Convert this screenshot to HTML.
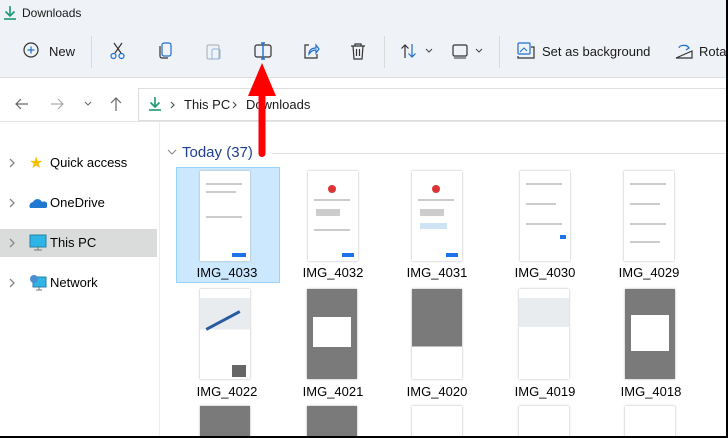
<!DOCTYPE html>
<html><head><style>
*{margin:0;padding:0;box-sizing:border-box}
html,body{width:728px;height:438px;overflow:hidden}
body{background:#fff;font-family:"Liberation Sans",sans-serif;position:relative;color:#000}
.abs{position:absolute}
.title{left:0;top:0;width:728px;height:26px;background:#eff2f7}
.tb{left:0;top:26px;width:728px;height:52px;background:#eff2f7;border-bottom:1px solid #dcdcdc}
.t{font-size:13px;color:#1a1a1a}
.sep{width:1px;height:32px;background:#dadada;top:36px}
.addr{left:138px;top:88px;width:592px;height:33px;border:1px solid #dedede;border-right:none;background:#fff}
.side{left:0;top:122px;width:160px;height:316px;border-right:1px solid #eee}
.item{left:0;height:28px;width:157px;font-size:13px}
.thumb{width:50px;height:90px;background:#fff;box-shadow:0 0 2px #aaa;overflow:hidden}
.r2{height:90px;top:289px}
.r3{height:40px;top:406px}
.dark{background:#7a7a7a}
.lbl{font-size:13px;width:100px;text-align:center}
.ln{position:absolute;height:2px;background:#ccc;left:6px}
.chev{position:absolute;left:9px;top:9px}
</style></head><body>
<div class="abs title"></div>
<svg class="abs" style="left:3px;top:5px" width="14" height="16"><path d="M7 1v10M2.5 6.5L7 11l4.5-4.5" stroke="#1a9a6e" stroke-width="1.6" fill="none"/><path d="M1 14h12" stroke="#1a9a6e" stroke-width="1.6"/></svg>
<div class="abs t" style="left:22px;top:6px;font-size:12px">Downloads</div>
<div class="abs tb"></div>
<svg class="abs" style="left:23px;top:42px" width="16" height="16"><circle cx="8" cy="8" r="7" stroke="#333" fill="none" stroke-width="1.2"/><path d="M8 4.5v7M4.5 8h7" stroke="#1f6fd0" stroke-width="1.2"/></svg>
<div class="abs t" style="left:49px;top:44px">New</div>
<div class="abs sep" style="left:91px"></div>
<svg class="abs" style="left:109px;top:42px" width="18" height="18"><path d="M5 1l7 10M13 1L6 11" stroke="#333" stroke-width="1.2"/><circle cx="4.5" cy="14" r="2.5" stroke="#1f6fd0" fill="none" stroke-width="1.2"/><circle cx="12.5" cy="14" r="2.5" stroke="#1f6fd0" fill="none" stroke-width="1.2"/></svg>
<svg class="abs" style="left:158px;top:42px" width="16" height="18"><rect x="4" y="1" width="9" height="13" rx="2" stroke="#1f6fd0" fill="none" stroke-width="1.2"/><path d="M2 4v10a2 2 0 0 0 2 2h6" stroke="#333" fill="none" stroke-width="1.2"/></svg>
<svg class="abs" style="left:206px;top:42px" width="16" height="18" opacity=".45"><rect x="1" y="3" width="12" height="14" rx="1.5" stroke="#555" fill="none"/><rect x="6" y="7" width="8" height="10" rx="1.5" stroke="#1f6fd0" fill="none"/></svg>
<svg class="abs" style="left:254px;top:42px" width="18" height="18"><rect x="1" y="3" width="16" height="12" rx="2" stroke="#333" fill="none" stroke-width="1.2"/><path d="M9 1v16M7 1h4M7 17h4" stroke="#1f6fd0" stroke-width="1.4"/></svg>
<svg class="abs" style="left:302px;top:42px" width="18" height="18"><path d="M7 3H3v13h12v-4" stroke="#333" fill="none" stroke-width="1.2"/><path d="M7 12c0-4 3-6 7-6V3l3 4-3 4V8c-3 0-5 1-7 4z" stroke="#1f6fd0" fill="none" stroke-width="1.2"/></svg>
<svg class="abs" style="left:350px;top:42px" width="16" height="18"><path d="M1 4h14M5 4V2h6v2M3 4l1 13h8l1-13M6.5 7v7M9.5 7v7" stroke="#333" fill="none" stroke-width="1.2"/></svg>
<div class="abs sep" style="left:384px"></div>
<svg class="abs" style="left:400px;top:42px" width="18" height="18"><path d="M5 16V3M1.5 6.5L5 3l3.5 3.5" stroke="#333" fill="none" stroke-width="1.2"/><path d="M12 2v13M8.5 11.5L12 15l3.5-3.5" stroke="#1f6fd0" fill="none" stroke-width="1.2"/></svg>
<svg class="abs" style="left:425px;top:48px" width="8" height="6"><path d="M1 1l3 3 3-3" stroke="#444" fill="none"/></svg>
<svg class="abs" style="left:452px;top:43px" width="16" height="16"><rect x="1" y="2" width="14" height="11" rx="1.5" stroke="#333" fill="none" stroke-width="1.2"/><path d="M2 15h12" stroke="#333"/></svg>
<svg class="abs" style="left:475px;top:48px" width="8" height="6"><path d="M1 1l3 3 3-3" stroke="#444" fill="none"/></svg>
<div class="abs sep" style="left:499px"></div>
<svg class="abs" style="left:517px;top:42px" width="18" height="18"><rect x="1" y="1" width="12" height="11" rx="1" stroke="#1f6fd0" fill="none" stroke-width="1.2"/><path d="M3 10l4-4 3 3" stroke="#1f6fd0" fill="none"/><path d="M1 14v2h16v-11h-3" stroke="#333" fill="none" stroke-width="1.2"/></svg>
<div class="abs t" style="left:542px;top:44px">Set as background</div>
<svg class="abs" style="left:675px;top:42px" width="18" height="18"><path d="M4 6c0-3 8-4 10 0M11 3l3 3-3 2" stroke="#1f6fd0" fill="none" stroke-width="1.2"/><path d="M1 16h16L17 9z" stroke="#333" fill="none" stroke-width="1.2"/></svg>
<div class="abs t" style="left:699px;top:44px">Rotat</div>

<div class="abs" style="left:0;top:78px;width:728px;height:44px;background:#fff;border-bottom:1px solid #e5e5e5"></div>
<svg class="abs" style="left:14px;top:96px" width="110" height="16"><path d="M2 8h12M7 3L2 8l5 5" stroke="#666" fill="none" stroke-width="1.2"/><path d="M37 8h12M44 3l5 5-5 5" stroke="#aaa" fill="none" stroke-width="1.2"/><path d="M71 6l3 3 3-3" stroke="#666" fill="none"/><path d="M102 2v13M97 7l5-5 5 5" stroke="#666" fill="none" stroke-width="1.2"/></svg>
<div class="abs addr"></div>
<svg class="abs" style="left:148px;top:96px" width="14" height="16"><path d="M7 1v10M2.5 6.5L7 11l4.5-4.5" stroke="#1a9a6e" stroke-width="1.6" fill="none"/><path d="M1 14h12" stroke="#1a9a6e" stroke-width="1.6"/></svg>
<svg class="abs" style="left:170px;top:101px" width="6" height="8"><path d="M1 1l3 3-3 3" stroke="#555" fill="none" stroke-width="1.2"/></svg>
<div class="abs t" style="left:184px;top:97px">This PC</div>
<svg class="abs" style="left:232px;top:101px" width="6" height="8"><path d="M1 1l3 3-3 3" stroke="#555" fill="none" stroke-width="1.2"/></svg>
<div class="abs t" style="left:246px;top:97px">Downloads</div>

<div class="abs side"></div>
<div class="abs item" style="top:149px"><svg class="chev" width="6" height="10"><path d="M1 1l4 4-4 4" stroke="#888" fill="none" stroke-width="1.3"/></svg><span class="abs" style="left:29px;top:4px;color:#f5c000;font-size:16px">★</span><span class="abs" style="left:50px;top:6px">Quick access</span></div>
<div class="abs item" style="top:189px"><svg class="chev" width="6" height="10"><path d="M1 1l4 4-4 4" stroke="#888" fill="none" stroke-width="1.3"/></svg><svg class="abs" style="left:29px;top:8px" width="18" height="12"><path d="M1 11a4 4 0 0 1 3-6 5 5 0 0 1 9 0 3.5 3.5 0 0 1 4 6z" fill="#1f78d1"/></svg><span class="abs" style="left:50px;top:6px">OneDrive</span></div>
<div class="abs item" style="top:229px;background:#dadcdc"><svg class="chev" width="6" height="10"><path d="M1 1l4 4-4 4" stroke="#888" fill="none" stroke-width="1.3"/></svg><svg class="abs" style="left:29px;top:5px" width="18" height="18"><rect x="1" y="1" width="16" height="12" fill="#2fb4e6" stroke="#2a7fa8"/><path d="M9 13v3M5 16h8" stroke="#777"/></svg><span class="abs" style="left:50px;top:6px">This PC</span></div>
<div class="abs item" style="top:269px"><svg class="chev" width="6" height="10"><path d="M1 1l4 4-4 4" stroke="#888" fill="none" stroke-width="1.3"/></svg><svg class="abs" style="left:29px;top:5px" width="18" height="18"><rect x="4" y="3" width="13" height="10" fill="#2fb4e6" stroke="#2a7fa8"/><circle cx="5" cy="5" r="4" fill="#4a8fd0"/><path d="M10 13v3M7 16h6" stroke="#777"/></svg><span class="abs" style="left:50px;top:6px">Network</span></div>

<svg class="abs" style="left:167px;top:149px" width="10" height="7"><path d="M1 1l4 4 4-4" stroke="#888" fill="none"/></svg>
<div class="abs" style="left:182px;top:144px;color:#1e3f8f;font-size:15px">Today (37)</div>
<div class="abs" style="left:272px;top:153px;width:456px;height:1px;background:#e2e2e2"></div>
<div class="abs" style="left:176px;top:167px;width:104px;height:116px;background:#cce8ff;border:1px solid #99d1ff"></div>

<!-- row1 -->
<div class="abs thumb" style="left:200px;top:171px"><div class="ln" style="top:12px;width:36px"></div><div class="ln" style="top:20px;width:30px"></div><div class="ln" style="top:45px;width:36px"></div><div class="abs" style="left:32px;top:82px;width:14px;height:4px;background:#1a73e8"></div></div>
<div class="abs thumb" style="left:308px;top:171px"><div class="abs" style="left:20px;top:14px;width:8px;height:8px;border-radius:50%;background:#d33"></div><div class="ln" style="top:28px;width:36px"></div><div class="abs" style="left:8px;top:38px;width:24px;height:7px;background:#ccc"></div><div class="ln" style="top:58px;width:36px"></div><div class="abs" style="left:34px;top:82px;width:12px;height:4px;background:#1a73e8"></div></div>
<div class="abs thumb" style="left:412px;top:171px"><div class="abs" style="left:20px;top:14px;width:8px;height:8px;border-radius:50%;background:#d33"></div><div class="ln" style="top:28px;width:36px"></div><div class="abs" style="left:8px;top:38px;width:24px;height:7px;background:#ccc"></div><div class="abs" style="left:8px;top:52px;width:27px;height:6px;background:#cfe3f7"></div><div class="abs" style="left:34px;top:82px;width:12px;height:4px;background:#1a73e8"></div></div>
<div class="abs thumb" style="left:520px;top:171px"><div class="ln" style="top:12px;width:36px"></div><div class="ln" style="top:32px;width:30px"></div><div class="ln" style="top:52px;width:36px"></div><div class="abs" style="left:40px;top:64px;width:6px;height:4px;background:#1a73e8"></div></div>
<div class="abs thumb" style="left:624px;top:171px"><div class="ln" style="top:12px;width:36px"></div><div class="ln" style="top:32px;width:30px"></div><div class="ln" style="top:52px;width:36px"></div><div class="ln" style="top:70px;width:30px"></div></div>
<div class="abs lbl" style="left:177px;top:265px">IMG_4033</div>
<div class="abs lbl" style="left:283px;top:265px">IMG_4032</div>
<div class="abs lbl" style="left:387px;top:265px">IMG_4031</div>
<div class="abs lbl" style="left:495px;top:265px">IMG_4030</div>
<div class="abs lbl" style="left:599px;top:265px">IMG_4029</div>

<!-- row2 -->
<div class="abs thumb r2" style="left:200px;background:linear-gradient(#fff 0,#fff 10%,#e8ecef 10%,#e8ecef 45%,#fff 45%)"><div class="abs" style="left:4px;top:30px;width:38px;height:3px;background:#2a5aa0;transform:rotate(-28deg)"></div><div class="abs" style="left:32px;top:76px;width:14px;height:12px;background:#666"></div></div>
<div class="abs thumb dark r2" style="left:307px"><div class="abs" style="left:6px;top:28px;width:38px;height:30px;background:#fff"></div></div>
<div class="abs thumb dark r2" style="left:412px;background:linear-gradient(#7a7a7a 64%,#fff 64%)"></div>
<div class="abs thumb r2" style="left:519px;background:linear-gradient(#fff 10%,#e8ecef 10%,#e8ecef 42%,#fff 42%)"></div>
<div class="abs thumb dark r2" style="left:625px"><div class="abs" style="left:6px;top:26px;width:38px;height:36px;background:#fff"></div></div>
<div class="abs lbl" style="left:177px;top:384px">IMG_4022</div>
<div class="abs lbl" style="left:283px;top:384px">IMG_4021</div>
<div class="abs lbl" style="left:387px;top:384px">IMG_4020</div>
<div class="abs lbl" style="left:495px;top:384px">IMG_4019</div>
<div class="abs lbl" style="left:601px;top:384px">IMG_4018</div>

<!-- row3 -->
<div class="abs thumb dark r3" style="left:200px"></div>
<div class="abs thumb dark r3" style="left:307px"></div>
<div class="abs thumb r3" style="left:412px"></div>
<div class="abs thumb r3" style="left:519px"></div>
<div class="abs thumb r3" style="left:625px"></div>

<!-- red arrow -->
<svg class="abs" style="left:240px;top:55px" width="50" height="110"><path d="M22 8L36 41H8z" fill="#f00"/><rect x="18.5" y="38" width="7" height="64" rx="3.5" fill="#f00"/></svg>

<div class="abs" style="left:726px;top:0;width:2px;height:438px;background:#000"></div>
<div class="abs" style="left:0;top:436px;width:728px;height:2px;background:#000"></div>
</body></html>
